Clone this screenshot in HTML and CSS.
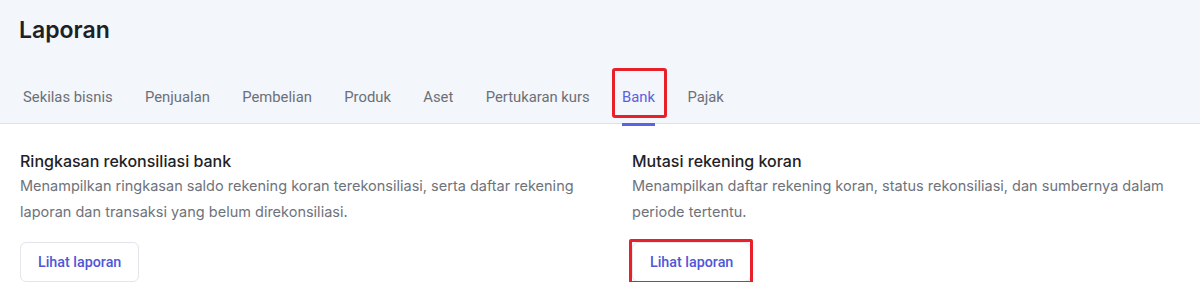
FILE: index.html
```html
<!DOCTYPE html>
<html lang="id">
<head>
    <meta charset="UTF-8">
    <meta name="viewport" content="width=device-width, initial-scale=1.0">
    <title>Laporan</title>
    <link rel="stylesheet" href="styles.css">
</head>
<body>
    <div class="page-header">
        <h1>Laporan</h1>
        <nav class="tabs">
            <a class="tab">Sekilas bisnis</a>
            <a class="tab">Penjualan</a>
            <a class="tab">Pembelian</a>
            <a class="tab">Produk</a>
            <a class="tab">Aset</a>
            <a class="tab">Pertukaran kurs</a>
            <a class="tab active marked">Bank</a>
            <a class="tab">Pajak</a>
        </nav>
    </div>

    <div class="reports">
        <div class="report">
            <h2>Ringkasan rekonsiliasi bank</h2>
            <p>Menampilkan ringkasan saldo rekening koran terekonsiliasi, serta daftar rekening laporan dan transaksi yang belum direkonsiliasi.</p>
            <button class="view-btn">Lihat laporan</button>
        </div>
        <div class="report">
            <h2>Mutasi rekening koran</h2>
            <p>Menampilkan daftar rekening koran, status rekonsiliasi, dan sumbernya dalam periode tertentu.</p>
            <button class="view-btn marked">Lihat laporan</button>
        </div>
    </div>
</body>
</html>
```

FILE: styles.css
```css
body {
    margin: 0;
    font-family: Inter, "Noto Sans", sans-serif;
    background: #fff;
    color: #1e2227;
}
.page-header {
    background: #f3f6fb;
    border-bottom: 1px solid #dde1e8;
    padding: 15px 19px 0;
}
.page-header h1 {
    margin: 0;
    font-size: 23px;
    line-height: 30px;
    font-weight: 600;
    color: #1d2125;
}
.tabs {
    display: flex;
    gap: 32.4px;
    margin-top: 42px;
    padding-left: 4px;
}
.tab {
    position: relative;
    font-family: Roboto, "Liberation Sans", sans-serif;
    font-size: 14.8px;
    line-height: 20px;
    color: #6b7078;
    padding-bottom: 16px;
    cursor: pointer;
}
.tab.active {
    color: #5b60e0;
}
.tab.active::after {
    content: "";
    position: absolute;
    left: 0;
    right: 0;
    bottom: -3px;
    height: 3px;
    background: #5b63e6;
}
/* red annotation frames from the screenshot */
.tab.marked::before {
    content: "";
    position: absolute;
    top: -19px;
    bottom: 5px;
    left: -10px;
    right: -12px;
    border: 3px solid #e8202a;
    border-radius: 3px;
}
.reports {
    display: grid;
    grid-template-columns: 1fr 1fr;
    column-gap: 52px;
    padding: 27px 8px 0 20px;
}
.report h2 {
    margin: 0;
    font-size: 16px;
    line-height: 20px;
    font-weight: 500;
    color: #1e2227;
}
.report p {
    margin: 2px 0 0;
    font-size: 14.5px;
    line-height: 26px;
    color: #6e737b;
}
.view-btn {
    position: relative;
    margin-top: 17px;
    height: 40px;
    padding: 0 17px;
    background: #fff;
    border: 1px solid #e2e5ea;
    border-radius: 6px;
    font-family: Roboto, "Liberation Sans", sans-serif;
    font-size: 14.3px;
    font-weight: 500;
    color: #4f56d8;
    cursor: pointer;
}
.view-btn.marked::after {
    content: "";
    position: absolute;
    top: -4px;
    bottom: -3px;
    left: -4px;
    right: -3px;
    border: 3px solid #e8202a;
    border-radius: 2px;
}
```
